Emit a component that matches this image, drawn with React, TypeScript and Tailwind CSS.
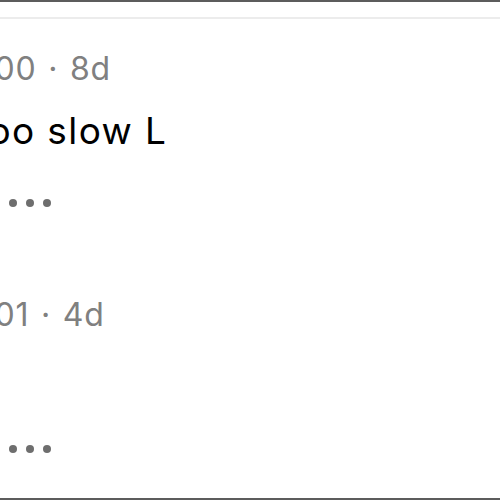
type Comment = {
  score: string
  age: string
  text: string
}

const comments: Comment[] = [
  { score: "100", age: "8d", text: "Too slow L" },
  { score: "101", age: "4d", text: "" },
]

function Dots() {
  return (
    <div className="flex h-[20px] items-center gap-[9px]">
      <span className="h-[8px] w-[8px] rounded-full bg-[#6e6e6e]" />
      <span className="h-[8px] w-[8px] rounded-full bg-[#6e6e6e]" />
      <span className="h-[8px] w-[8px] rounded-full bg-[#6e6e6e]" />
    </div>
  )
}

function CommentRow({ c }: { c: Comment }) {
  return (
    <div className="flex flex-col">
      <div className="-ml-[19px] flex h-[36px] items-center whitespace-nowrap text-[32px] leading-[36px] tracking-[0.6px] text-[#808080]">
        <span>{c.score}</span>
        <span className="mx-[12px]">·</span>
        <span>{c.age}</span>
      </div>
      <div className="-ml-[34px] mt-[24px] h-[40px] whitespace-nowrap text-[37px] leading-[40px] tracking-[1.4px] text-black">
        {c.text}
      </div>
      <div className="mt-[42px] pl-[9px]">
        <Dots />
      </div>
    </div>
  )
}

export default function App() {
  return (
    <div
      className="h-[500px] w-[500px] overflow-hidden border-y-2 border-[#5c5c5c] bg-white"
      style={{ fontFamily: "Inter, 'Noto Sans', sans-serif" }}
    >
      <div className="h-[17px] border-b-2 border-[#ececec] bg-white" />
      <div className="flex flex-col gap-[84px] pt-[32px]">
        {comments.map((c) => (
          <CommentRow key={c.score} c={c} />
        ))}
      </div>
    </div>
  )
}
